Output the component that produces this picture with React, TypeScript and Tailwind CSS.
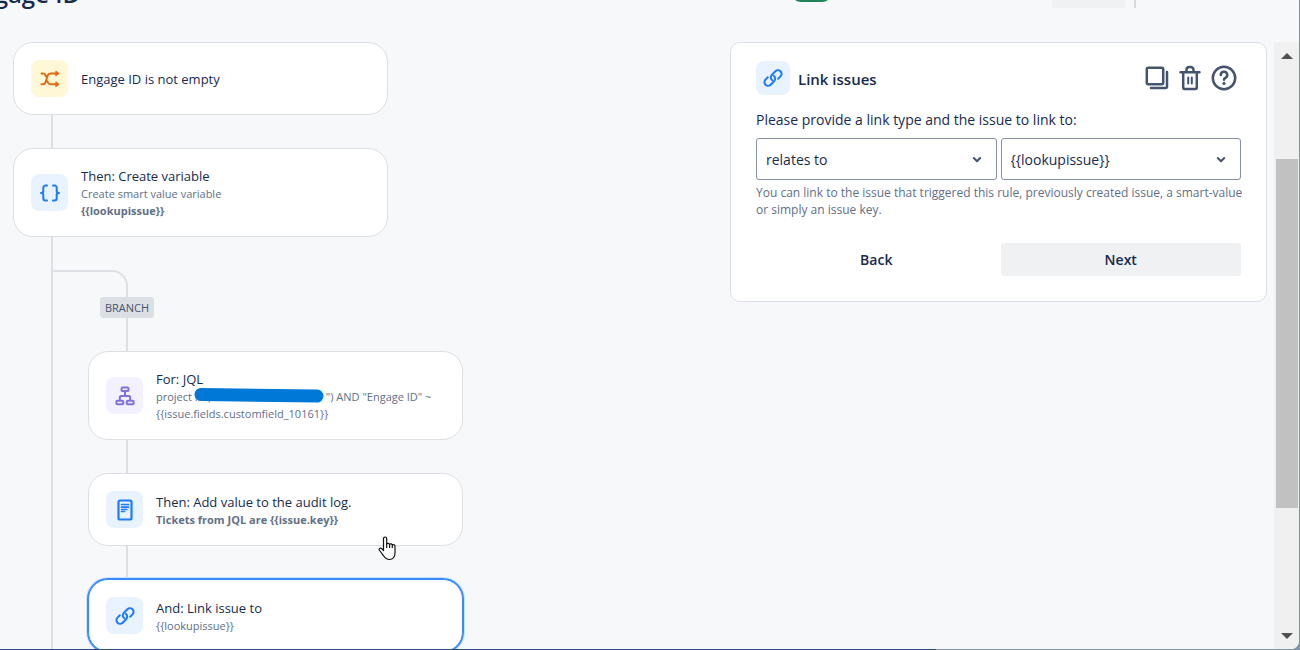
import type { ReactNode } from 'react'

const tones = {
  yellow: 'bg-[#fff7d6] text-[#e56910]',
  blue: 'bg-[#e9f2ff] text-[#1d7afc]',
  purple: 'bg-[#f3f0ff] text-[#8270db]',
}

function ShuffleIcon() {
  return (
    <svg width="20" height="20" viewBox="0 0 20 20" fill="none" stroke="currentColor" strokeWidth="2" strokeLinecap="round" strokeLinejoin="round">
      <path d="M1.5 4.5h1.7c1.2 0 2 .8 2.4 2l.2.6M1.5 15.2h1.700c1.200 0 2-.8 2.400-2.200l2-6.300c.5-1.400 1.400-2.200 2.600-2.200H17M7.300 12.200l.3.8c.5 1.400 1.400 2.200 2.600 2.200H17" />
      <path d="M16 2.500l2.600 2-2.600 2zM16 13.200l2.600 2-2.600 2z" fill="currentColor" strokeWidth="1.400" />
    </svg>
  )
}

function BracesIcon() {
  return (
    <svg width="22" height="18" viewBox="0 0 22 18" fill="none" stroke="currentColor" strokeWidth="2" strokeLinecap="round" strokeLinejoin="round">
      <path d="M8 1.500H6.500A2.200 2.200 0 0 0 4.300 3.700v3.500C4.300 8.300 3.600 9 2 9c1.600 0 2.300.7 2.300 1.800v3.500a2.200 2.200 0 0 0 2.200 2.200H8" />
      <path d="M14 1.500h1.500a2.200 2.200 0 0 1 2.200 2.200v3.500c0 1.100.7 1.800 2.300 1.800-1.600 0-2.300.7-2.300 1.800v3.500a2.200 2.200 0 0 1-2.200 2.200H14" />
    </svg>
  )
}

function TreeIcon() {
  return (
    <svg width="20" height="20" viewBox="0 0 20 20" fill="none" stroke="currentColor" strokeWidth="2" strokeLinejoin="round">
      <rect x="6.500" y="1.500" width="7" height="3.600" rx="1.200" />
      <rect x="1.300" y="14.700" width="7" height="3.600" rx="1.200" />
      <rect x="11.700" y="14.700" width="7" height="3.600" rx="1.200" />
      <path d="M10 5.500v4.500M4.800 14.500v-3a1.500 1.500 0 0 1 1.500-1.500h7.400a1.500 1.500 0 0 1 1.500 1.500v3" />
    </svg>
  )
}

function LogIcon() {
  return (
    <svg width="16" height="22" viewBox="0 0 16 22" fill="none" stroke="currentColor" strokeLinecap="round">
      <rect x="1.500" y="1.500" width="13" height="19" rx="1.500" strokeWidth="2.200" />
      <path d="M4.500 5.500h7M4.500 8.200h7M4.500 12.500h3" strokeWidth="1.700" />
      <path d="M4.500 10.500h5.500" strokeWidth="1.300" />
    </svg>
  )
}

function LinkIcon() {
  return (
    <svg width="20" height="20" viewBox="0 0 20 20" fill="none" stroke="currentColor" strokeWidth="2" strokeLinecap="round" strokeLinejoin="round">
      <path d="M9.300 12.300a3.700 3.700 0 0 1-.7-5.200l.3-.3 3.500-3.500a3.600 3.600 0 0 1 5.100 5.100l-2.300 2.300" />
      <path d="M10.700 7.700a3.700 3.700 0 0 1 .7 5.200l-.3.300-3.500 3.500a3.600 3.600 0 0 1-5.100-5.100l2.300-2.300" />
    </svg>
  )
}

function CopyIcon() {
  return (
    <svg width="24" height="24" viewBox="0 0 24 24" fill="none" stroke="currentColor" strokeWidth="2.500" strokeLinecap="round" strokeLinejoin="round">
      <rect x="1.800" y="1.800" width="16.400" height="16.400" rx="1.500" />
      <path d="M22 6v14.500a1.500 1.500 0 0 1-1.500 1.500H6" />
    </svg>
  )
}

function TrashIcon() {
  return (
    <svg width="22" height="26" viewBox="0 0 22 26" fill="none" stroke="currentColor" strokeWidth="2.500" strokeLinecap="round" strokeLinejoin="round">
      <path d="M1.500 7.200h19M7.500 7V4.800A2.800 2.800 0 0 1 10.300 2h1.400a2.800 2.800 0 0 1 2.800 2.800V7M4.200 7.500v15a1.500 1.500 0 0 0 1.500 1.500h10.600a1.500 1.500 0 0 0 1.500-1.500v-15" />
      <path d="M9.200 12.500v6M12.800 12.500v6" strokeWidth="2" />
    </svg>
  )
}

function HelpIcon() {
  return (
    <svg width="26" height="26" viewBox="0 0 26 26" fill="none" stroke="currentColor" strokeWidth="2.500" strokeLinecap="round" strokeLinejoin="round">
      <circle cx="13" cy="13" r="11.200" />
      <path d="M9.800 10a3.200 3.200 0 1 1 4.600 2.800c-.9.500-1.400.9-1.400 1.900" />
      <circle cx="13" cy="18.400" r="1.600" fill="currentColor" stroke="none" />
    </svg>
  )
}

function HandCursor() {
  return (
    <svg className="absolute top-[63px] left-[290px]" width="19" height="25" viewBox="0 0 19 25" fill="#fff" stroke="#111" strokeWidth="1.200" strokeLinejoin="round" aria-hidden="true">
      <path d="M5.500 14.500V2.600a1.600 1.600 0 0 1 3.200 0v5.200c.6-.8 2.400-.6 2.900.5.800-.8 2.300-.5 2.700.6 1-.7 2.700-.1 2.700 1.400v6.500c0 3.800-2.200 6.700-5.400 6.700-3 0-4.600-1.400-6-3.700L1.300 14c-.7-1.100.8-2.500 2.200-1.600z" />
      <path d="M8.700 7.500v4.500M11.600 8.300V12M14.300 9v3" fill="none" />
    </svg>
  )
}

type CardProps = {
  icon: ReactNode
  tone: keyof typeof tones
  title: string
  selected?: boolean
  children?: ReactNode
}

function RuleCard({ icon, tone, title, selected, children }: CardProps) {
  return (
    <div
      className={`w-[375px] shrink-0 flex items-center gap-[13px] p-[17px] bg-white border rounded-[20px] ${
        selected ? 'border-[#388bff] shadow-[0_0_0_1px_#388bff,0_0_0_2px_#cce0ff]' : 'border-[#dcdfe4]'
      }`}
    >
      <div className={`size-[37px] shrink-0 rounded-lg flex items-center justify-center ${tones[tone]}`}>{icon}</div>
      <div className="text-[11px] leading-[17px] text-[#626f86]">
        <div className="pt-0.5 text-[13px] leading-[17px] text-[#172b4d]">{title}</div>
        {children}
      </div>
    </div>
  )
}

function Connector() {
  return <div className="w-0.5 h-[33px] shrink-0 ml-[38px] bg-[#dcdfe4]" />
}

function Dropdown({ label, value }: { label: string; value: string }) {
  return (
    <div className="relative flex-1">
      <select
        aria-label={label}
        defaultValue={value}
        className="w-full h-[42px] appearance-none bg-white border border-[#8590a2] rounded-[3px] px-[9px] pt-0.5 text-sm text-[#172b4d]"
      >
        <option>{value}</option>
      </select>
      <svg className="absolute right-[15px] top-[17px] pointer-events-none text-[#44546f]" width="10" height="9" viewBox="0 0 10 9" fill="none" stroke="currentColor" strokeWidth="2" strokeLinecap="round" strokeLinejoin="round">
        <path d="M1.800 3L5 6.200 8.200 3" />
      </svg>
    </div>
  )
}

function LinkIssuesPanel() {
  return (
    <section className="w-[537px] shrink-0 self-start bg-white border border-[#dcdfe4] rounded-[10px] px-[25px] pt-[18px] pb-[25px] text-[#172b4d]">
      <div className="flex items-center">
        <div className={`size-[34px] rounded-lg flex items-center justify-center ${tones.blue}`}>
          <LinkIcon />
        </div>
        <h2 className="ml-2 pt-0.5 text-[15px] font-semibold">Link issues</h2>
        <div className="ml-auto mr-1 flex items-center gap-[10px] text-[#44546f]">
          <button aria-label="Duplicate"><CopyIcon /></button>
          <button aria-label="Delete"><TrashIcon /></button>
          <button aria-label="Help"><HelpIcon /></button>
        </div>
      </div>
      <p className="mt-[15px] text-sm leading-5">Please provide a link type and the issue to link to:</p>
      <div className="mt-2 flex gap-1">
        <Dropdown label="Link type" value="relates to" />
        <Dropdown label="Issue" value="{{lookupissue}}" />
      </div>
      <p className="mt-1 -mr-4 text-xs leading-[17px] text-[#626f86]">
        You can link to the issue that triggered this rule, previously created issue, a smart-value
        <br />
        or simply an issue key.
      </p>
      <div className="mt-[25px] flex gap-1 text-sm font-semibold">
        <button className="flex-1 h-[33px] rounded-[3px]">Back</button>
        <button className="flex-1 h-[33px] rounded-[3px] bg-[#f0f1f3]">Next</button>
      </div>
    </section>
  )
}

function RuleChain() {
  return (
    <div className="flex-1 flex flex-col pl-[13px]">
      <RuleCard icon={<ShuffleIcon />} tone="yellow" title="Engage ID is not empty" />
      <Connector />
      <RuleCard icon={<BracesIcon />} tone="blue" title="Then: Create variable">
        <div>Create smart value variable</div>
        <div className="font-bold">{'{{lookupissue}}'}</div>
      </RuleCard>
      <div className="flex-1 ml-[38px] pt-[33px] border-l-2 border-[#dcdfe4]">
        <div className="w-[75px] h-[27px] border-t-2 border-r-2 border-[#dcdfe4] rounded-tr-[16px]" />
        <div className="ml-[35px]">
          <div className="ml-3 w-[54px] h-[21px] rounded-[3px] bg-[#dcdfe4] text-[11px] leading-[21px] text-center text-[#44546f]">BRANCH</div>
          <Connector />
          <RuleCard icon={<TreeIcon />} tone="purple" title="For: JQL">
            <div className="whitespace-nowrap">
              project{' '}
              <span className="relative inline-block w-[131px]">
                in ("
                <svg className="absolute top-0 -left-1" width="136" height="17" viewBox="0 0 136 17" aria-hidden="true">
                  <path d="M10 6.500L126 8" stroke="#0078d7" strokeWidth="13" strokeLinecap="round" />
                </svg>
              </span>
              ") AND "Engage ID" ~
            </div>
            <div>{'{{issue.fields.customfield_10161}}'}</div>
          </RuleCard>
          <Connector />
          <div className="relative">
            <RuleCard icon={<LogIcon />} tone="blue" title="Then: Add value to the audit log.">
              <div className="font-bold">{'Tickets from JQL are {{issue.key}}'}</div>
            </RuleCard>
            <HandCursor />
          </div>
          <Connector />
          <RuleCard icon={<LinkIcon />} tone="blue" title="And: Link issue to" selected>
            <div>{'{{lookupissue}}'}</div>
          </RuleCard>
        </div>
      </div>
    </div>
  )
}

function ScrollTrack() {
  return (
    <div className="w-[25px] shrink-0 flex flex-col items-center bg-[#f0f0f0]">
      <svg className="shrink-0" width="25" height="25" viewBox="0 0 25 25" aria-hidden="true">
        <path d="M7 17l6-6 6 6z" fill="#505050" />
      </svg>
      <div className="grow-[92]" />
      <div className="grow-[349] w-[22px] bg-[#c1c1c1]" />
      <div className="grow-[116]" />
      <svg className="shrink-0" width="25" height="25" viewBox="0 0 25 25" aria-hidden="true">
        <path d="M7 9l6 6 6-6z" fill="#505050" />
      </svg>
    </div>
  )
}

export default function App() {
  return (
    <div className="h-screen flex flex-col overflow-hidden bg-[#7f93ab] font-['Open_Sans','Noto_Sans',sans-serif]">
      <div className="flex-1 min-h-0 mr-px flex flex-col overflow-hidden bg-[#f7f8fa] rounded-br-lg">
        <header className="h-[42px] shrink-0 flex items-start overflow-hidden pr-[163px]">
          <h1 className="-ml-[34px] -mt-[22px] text-2xl leading-8 font-semibold text-[#172b4d]">Engage ID</h1>
          <input type="checkbox" role="switch" defaultChecked aria-label="Rule enabled" className="ml-auto mr-[220px] -mt-[18px] w-[41px] h-5 appearance-none rounded-full bg-[#1f845a]" />
          <button aria-label="Update" className="-mt-6 w-[73px] h-8 rounded-[3px] bg-[#f0f1f3]" />
          <div className="ml-[9px] -mt-6 w-0.5 h-8 bg-[#d5d9e0]" />
        </header>
        <div className="flex-1 min-h-0 flex">
          <main className="flex-1 min-w-0 flex overflow-hidden pr-[7px]">
            <RuleChain />
            <LinkIssuesPanel />
          </main>
          <ScrollTrack />
        </div>
      </div>
      <div className="h-px shrink-0 flex">
        <div className="w-[72%] bg-[#2c4a80]" />
      </div>
    </div>
  )
}
